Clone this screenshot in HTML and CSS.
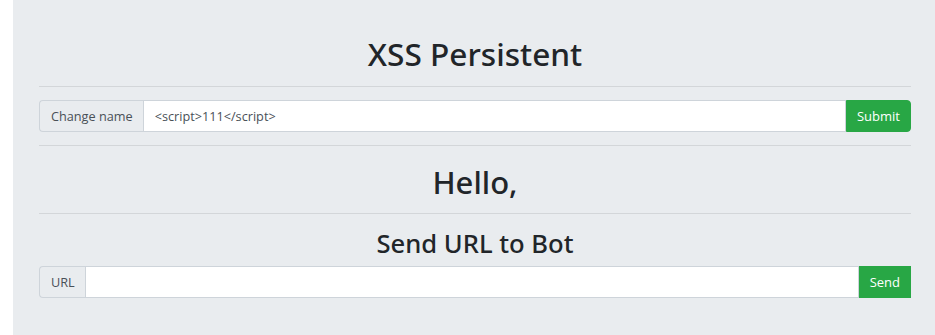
FILE: index.html
```html
<!DOCTYPE html>
<html>
<head>
<meta charset="utf-8">
<link rel="stylesheet" href="styles.css">
</head>
<body>
<div class="jumbotron">
  <h1 class="title">XSS Persistent</h1>
  <hr class="rule rule-top">
  <form class="input-group group-name">
    <span class="addon">Change name</span>
    <input class="field" type="text" value="<script>111</script>">
    <button class="btn btn-rounded" type="button">Submit</button>
  </form>
  <hr class="rule rule-mid">
  <h1 class="hello">Hello,</h1>
  <hr class="rule rule-low">
  <h3 class="subtitle">Send URL to Bot</h3>
  <form class="input-group group-url">
    <span class="addon">URL</span>
    <input class="field" type="text" value="">
    <button class="btn" type="button">Send</button>
  </form>
</div>
</body>
</html>
```
FILE: styles.css
```css
html, body {
  margin: 0;
  padding: 0;
  background: #ffffff;
}
body {
  font-family: "Open Sans", "Noto Sans", sans-serif;
  color: #212529;
}
.jumbotron {
  margin-left: 13px;
  background: #e9ecef;
  min-height: 335px;
  padding: 0 24px 0 26px;
  box-sizing: border-box;
  overflow: hidden;
}
.title, .hello, .subtitle {
  font-family: "Noto Sans", "Open Sans", sans-serif;
  font-weight: 500;
  text-align: center;
}
.title {
  margin: 34px 0 0;
  font-size: 31.6px;
  line-height: 40px;
}
.rule {
  border: 0;
  border-top: 1px solid #d3d6d9;
  margin: 0;
  height: 0;
}
.rule-top { margin-top: 12px; }
.rule-mid { margin-top: 13px; }
.rule-low { margin-top: 11px; }
.input-group {
  display: flex;
  height: 32px;
  margin: 13px 0 0;
}
.addon {
  display: flex;
  align-items: center;
  padding: 0 10px 0 11px;
  font-size: 12.7px;
  color: #495057;
  background: #e9ecef;
  border: 1px solid #ced4da;
  border-right: 0;
  border-radius: 4px 0 0 4px;
  box-sizing: border-box;
}
.field {
  flex: 1;
  min-width: 0;
  height: 32px;
  box-sizing: border-box;
  border: 1px solid #ced4da;
  background: #fff;
  padding: 0 11px;
  font-family: "Open Sans", "Noto Sans", sans-serif;
  font-size: 12.7px;
  color: #495057;
  outline: none;
  margin: 0;
}
.btn {
  background: #28a745;
  border: 1px solid #28a745;
  color: #fff;
  font-family: "Open Sans", "Noto Sans", sans-serif;
  font-size: 13px;
  padding: 0 10px;
  margin: 0;
  border-radius: 0;
  height: 32px;
}
.btn-rounded {
  border-radius: 0 4px 4px 0;
}
.hello {
  margin: 16px 0 0;
  font-size: 31px;
  line-height: 40px;
}
.subtitle {
  margin: 14px 0 0;
  font-size: 25.6px;
  line-height: 32px;
}
.group-url { margin-top: 6px; }
```
